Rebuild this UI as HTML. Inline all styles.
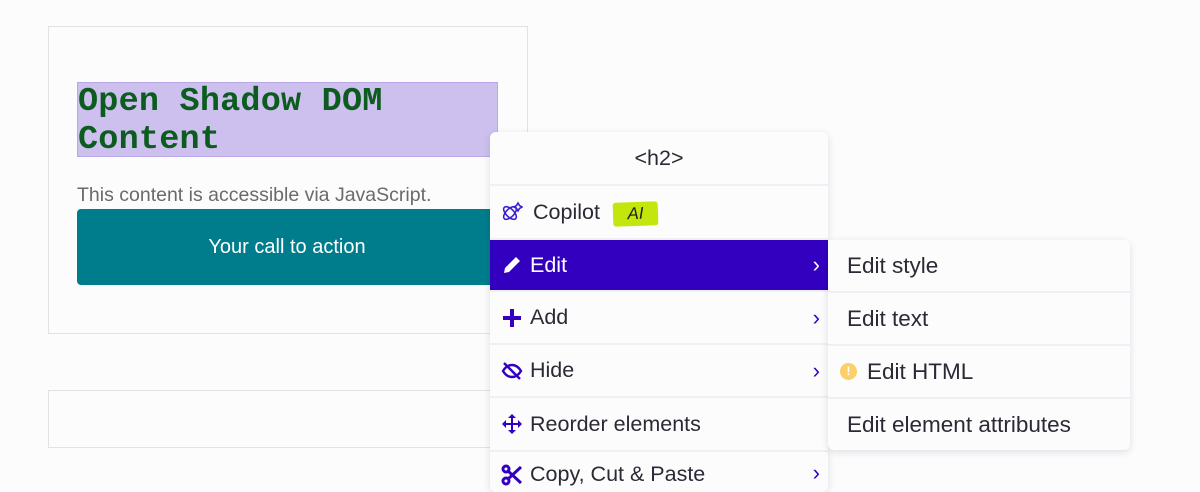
<!DOCTYPE html>
<html><head><style>
body{margin:0;width:1200px;height:485px;background:#fcfcfd;position:relative;overflow:hidden;font-family:"Liberation Sans",sans-serif}
.card{position:absolute;border:1px solid #e2e2e4;background:#fcfcfd}
.h{position:absolute;left:77px;top:82px;width:421px;height:75px;background:#cdc0ee;border:1px solid #b9a8e6;font-family:"Liberation Mono",monospace;font-weight:bold;font-size:33.5px;line-height:38px;color:#0b5c1e;box-sizing:border-box;letter-spacing:0.2px}
.p{position:absolute;left:77px;top:184px;font-size:19.5px;color:#6a6a6a}
.btn{position:absolute;left:77px;top:209px;width:420px;height:76px;background:#007d8c;border-radius:4px;color:#fff;font-size:20px;text-align:center;line-height:76px}
.menu{position:absolute;left:490px;top:132px;width:338px;height:360px;background:#eef0f5;border-radius:6px;box-shadow:0 2px 8px rgba(0,0,0,.12);overflow:hidden}
.row{position:absolute;left:0;width:100%;background:#fcfcfd;font-size:21.5px;color:#2a2a35;display:flex;align-items:center;box-sizing:border-box}
.row svg{position:absolute;left:11px}
.row .t{position:absolute;left:40px}
.chev{position:absolute;right:8px;color:#3300c0;font-size:22px}
.sub{position:absolute;left:828px;top:240px;width:302px;height:210px;background:#eef0f5;border-radius:0 6px 6px 6px;box-shadow:0 2px 8px rgba(0,0,0,.12);overflow:hidden}
.sub .row{font-size:22.5px}
.sub .row .t{left:19px}
</style></head><body>
<div class="card" style="left:48px;top:26px;width:478px;height:306px"></div>
<div class="card" style="left:48px;top:390px;width:478px;height:56px"></div>
<div class="h">Open Shadow DOM<br>Content</div>
<div class="p">This content is accessible via JavaScript.</div>
<div class="btn">Your call to action</div>

<div class="menu">
 <div class="row" style="top:0;height:52px;justify-content:center">&lt;h2&gt;</div>
 <div class="row" style="top:54px;height:52px">
  <svg width="22" height="22" viewBox="0 0 22 22" fill="none" stroke="#3a1fd0" stroke-width="1.6"><ellipse cx="9" cy="12" rx="8" ry="4" transform="rotate(45 9 12)"/><ellipse cx="9" cy="12" rx="8" ry="4" transform="rotate(-45 9 12)"/><path d="M17 2l1.5 2.5L21 6l-2.5 1.5L17 10l-1.5-2.5L13 6l2.5-1.5z"/></svg>
  <span class="t" style="left:43px">Copilot</span>
  <span style="position:absolute;left:123px;top:16px;width:45px;height:24px;background:#c3e60c;border-radius:3px;transform:rotate(-2deg);font-style:italic;font-size:17px;text-align:center;line-height:24px;color:#222">AI</span>
 </div>
 <div class="row" style="top:108px;height:50px;background:#3300c0;color:#fff">
  <svg width="22" height="22" viewBox="0 0 22 22"><path d="M3 19l1-5L15 3l4 4L8 18z" fill="#fff"/></svg>
  <span class="t">Edit</span><span class="chev" style="color:#fff">&#8250;</span></div>
 <div class="row" style="top:160px;height:51px">
  <svg width="22" height="22" viewBox="0 0 22 22"><path d="M11 2v18M2 11h18" stroke="#3300c0" stroke-width="4"/></svg>
  <span class="t">Add</span><span class="chev">&#8250;</span></div>
 <div class="row" style="top:213px;height:51px">
  <svg width="22" height="22" viewBox="0 0 22 22" fill="none" stroke="#3300c0" stroke-width="2.4"><path d="M2 11c3-5 6-6 9-6s6 1 9 6c-3 5-6 6-9 6s-6-1-9-6z"/><path d="M3 3l16 16"/></svg>
  <span class="t">Hide</span><span class="chev">&#8250;</span></div>
 <div class="row" style="top:266px;height:52px">
  <svg width="22" height="22" viewBox="0 0 22 22"><path d="M11 1l4 4h-3v5h5V7l4 4-4 4v-3h-5v5h3l-4 4-4-4h3v-5H5v3l-4-4 4-4v3h5V5H7z" fill="#3300c0"/></svg>
  <span class="t">Reorder elements</span></div>
 <div class="row" style="top:320px;height:52px;align-items:flex-start">
  <svg width="22" height="22" viewBox="0 0 22 22" style="top:12px" fill="none" stroke="#3300c0" stroke-width="3"><circle cx="5" cy="5" r="3"/><circle cx="5" cy="17" r="3"/><path d="M7 7l13 12M7 15L20 3"/></svg>
  <span class="t" style="top:10px">Copy, Cut &amp; Paste</span><span class="chev" style="top:8px">&#8250;</span></div>
</div>

<div class="sub">
 <div class="row" style="top:0;height:51px"><span class="t">Edit style</span></div>
 <div class="row" style="top:53px;height:51px"><span class="t">Edit text</span></div>
 <div class="row" style="top:106px;height:51px">
  <span style="position:absolute;left:12px;width:17px;height:17px;border-radius:50%;background:#fbd06a;color:#fff;font-size:12px;font-weight:bold;text-align:center;line-height:17px">!</span>
  <span class="t" style="left:39px">Edit HTML</span></div>
 <div class="row" style="top:159px;height:51px"><span class="t">Edit element attributes</span></div>
</div>
</body></html>
